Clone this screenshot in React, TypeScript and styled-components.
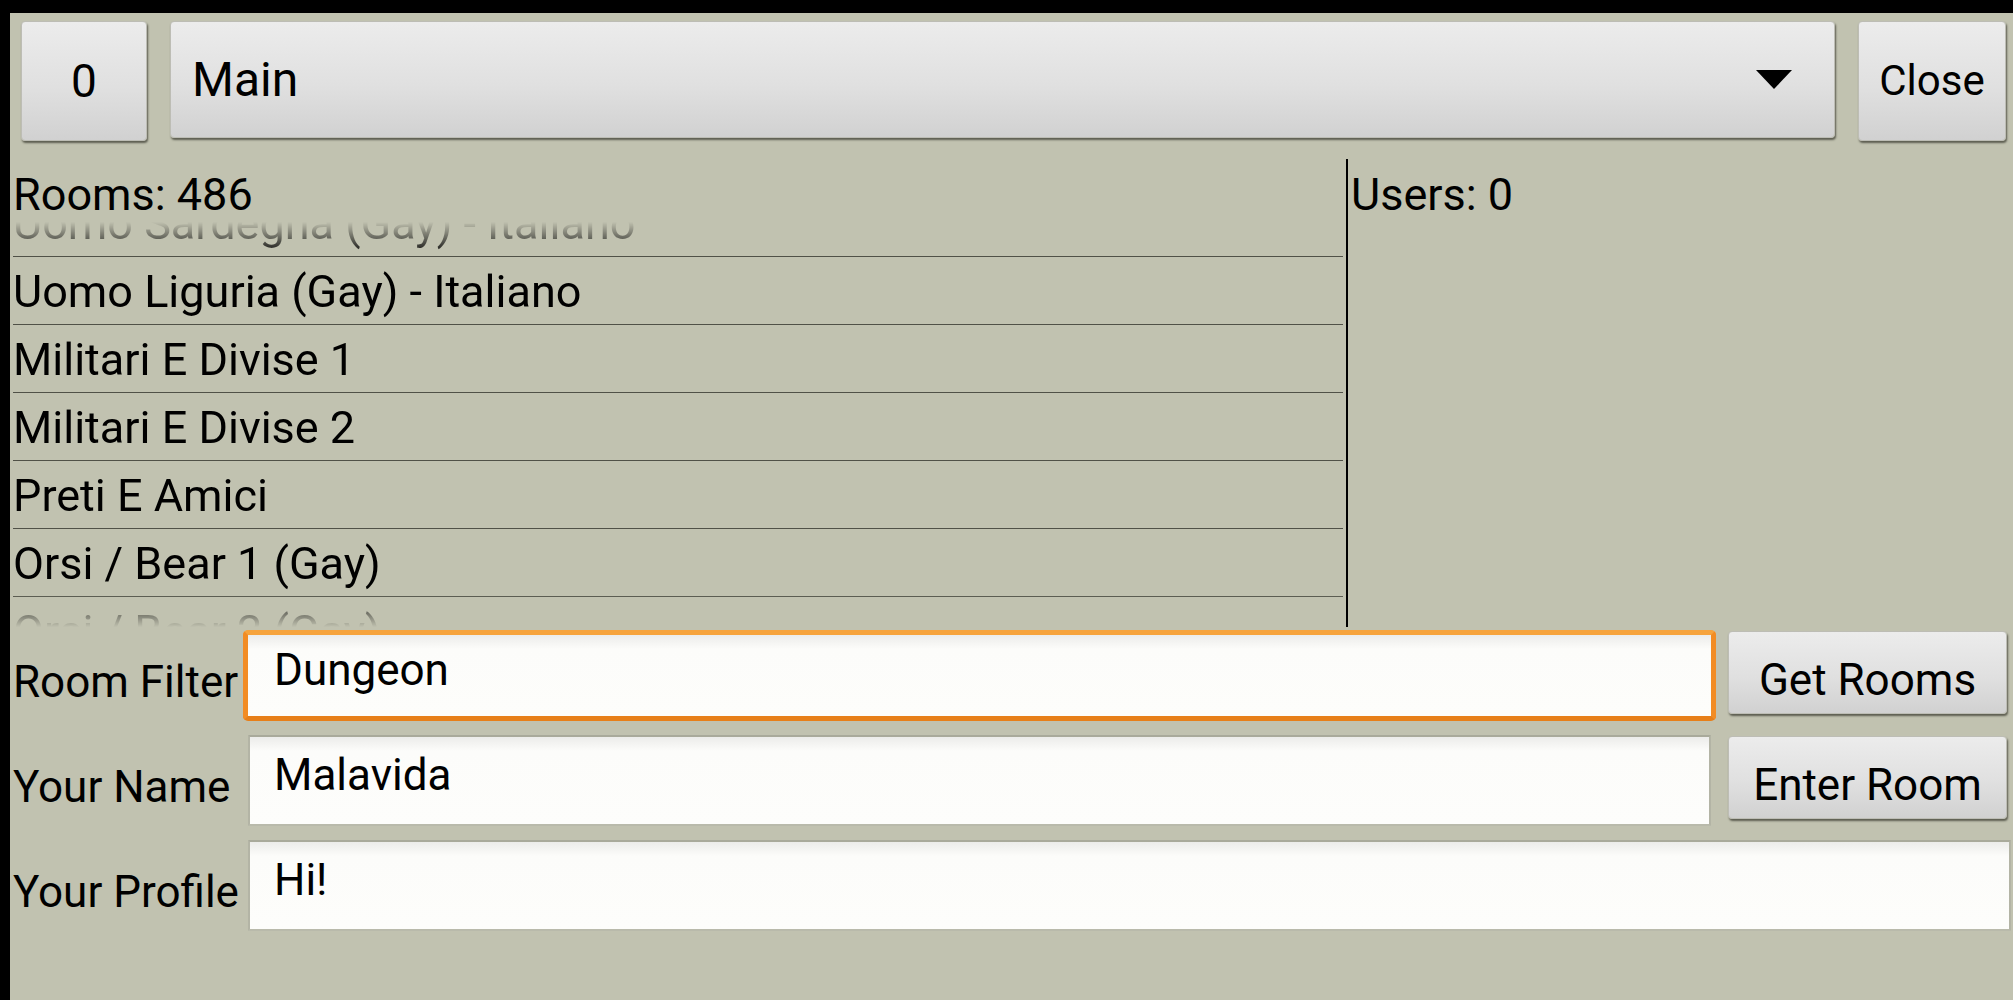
import styled, { createGlobalStyle } from 'styled-components';

// Global page styles
const GlobalStyle = createGlobalStyle`
  html, body {
    margin: 0;
    padding: 0;
    background: #000;
  }
  body {
    font-family: Roboto, "Liberation Sans", Arial, sans-serif;
    color: #000;
  }
`;

// Screen area (black bars on top and left are the body)
const Screen = styled.div`
  margin: 13px 0 0 10px;
  height: 987px;
  background: #c1c2b0;
  display: flex;
  flex-direction: column;
  overflow: hidden;
`;

// Top toolbar
const TopBar = styled.div`
  display: flex;
  align-items: flex-start;
  gap: 23px;
  padding: 8px 7px 0 11px;
  height: 130px;
  box-sizing: border-box;
  flex: none;
`;

const GrayButton = styled.button<{ $w: number; $h: number; $fs: number }>`
  width: ${(p) => p.$w}px;
  height: ${(p) => p.$h}px;
  flex: none;
  margin: 0;
  padding: 0;
  border: 1px solid #bdbdb5;
  border-radius: 4px;
  background: linear-gradient(to bottom, #ececec 0%, #e0e0e0 55%, #d1d1d1 100%);
  box-shadow: 1px 2px 2px rgba(40, 40, 30, 0.65);
  font-family: Roboto, "Liberation Sans", Arial, sans-serif;
  font-size: ${(p) => p.$fs}px;
  color: #000;
  line-height: 1;
`;

const Spinner = styled.div`
  flex: 1;
  height: 117px;
  box-sizing: border-box;
  display: flex;
  align-items: center;
  justify-content: space-between;
  padding: 0 42px 0 21px;
  border: 1px solid #bdbdb5;
  border-radius: 4px;
  background: linear-gradient(to bottom, #ececec 0%, #e0e0e0 55%, #d1d1d1 100%);
  box-shadow: 1px 2px 2px rgba(40, 40, 30, 0.65);
  font-size: 48px;
`;

// Rooms / users panels
const MainArea = styled.div`
  display: flex;
  flex: none;
  margin-top: 16px;
  padding-left: 3px;
  height: 468px;
`;

const RoomsColumn = styled.div`
  width: 1330px;
  display: flex;
  flex-direction: column;
`;

const UsersColumn = styled.div`
  flex: 1;
  margin-left: 3px;
  padding-left: 3px;
  border-left: 2px solid #000;
`;

const PanelHeader = styled.div`
  height: 63px;
  box-sizing: border-box;
  padding-top: 10px;
  font-size: 45px;
  line-height: 52px;
  white-space: nowrap;
`;

const ListViewport = styled.div`
  flex: 1;
  overflow: hidden;
  -webkit-mask-image: linear-gradient(to bottom, transparent 0, #000 34px, #000 calc(100% - 34px), transparent 100%);
  mask-image: linear-gradient(to bottom, transparent 0, #000 34px, #000 calc(100% - 34px), transparent 100%);
`;

const ListInner = styled.div<{ $scroll: number }>`
  margin-top: ${(p) => -p.$scroll}px;
`;

const RoomRow = styled.div`
  height: 68px;
  box-sizing: border-box;
  padding-top: 9px;
  border-bottom: 1px solid #505147;
  font-size: 45px;
  line-height: 52px;
  white-space: nowrap;
`;

// Form at the bottom
const Form = styled.div`
  display: flex;
  flex-direction: column;
  flex: none;
  gap: 14px;
  margin-top: 3px;
`;

const FormRow = styled.div<{ $pr: number }>`
  display: flex;
  align-items: center;
  height: 91px;
  padding-right: ${(p) => p.$pr}px;
`;

const Label = styled.div`
  width: 236px;
  flex: none;
  box-sizing: border-box;
  padding: 12px 0 0 3px;
  font-size: 44px;
  line-height: 52px;
  white-space: nowrap;
`;

const Field = styled.div<{ $focused?: boolean }>`
  flex: 1;
  align-self: stretch;
  box-sizing: border-box;
  margin: ${(p) => (p.$focused ? '0 -3px' : '0 2px')};
  padding: ${(p) => (p.$focused ? '9px 26px 0' : '12px 24px 0')};
  font-size: 44px;
  line-height: 52px;
  white-space: nowrap;
  background: linear-gradient(to bottom, #ececea 0px, #fcfcfa 14px, #fdfdfb 100%);
  border: ${(p) => (p.$focused ? '5px solid #f28c24' : '2px solid #b3b4a5')};
  border-top-color: ${(p) => (p.$focused ? '#f6a33c' : '#a9aa9b')};
  border-bottom-color: ${(p) => (p.$focused ? '#e77f19' : '#b9baab')};
  border-radius: ${(p) => (p.$focused ? '5px' : '1px')};
`;

const ActionButton = styled(GrayButton)`
  align-self: flex-start;
  margin: 1px 0 0 15px;
  padding-top: 15px;
`;

const rooms = [
  'Uomo Sardegna (Gay) - Italiano',
  'Uomo Liguria (Gay) - Italiano',
  'Militari E Divise 1',
  'Militari E Divise 2',
  'Preti E Amici',
  'Orsi / Bear 1 (Gay)',
  'Orsi / Bear 2 (Gay)',
  'Orsi / Bear 3 (Gay)',
];

const DropArrow = () => (
  <svg width="36" height="19" viewBox="0 0 36 19">
    <polygon points="0,0 36,0 18,19" fill="#000" />
  </svg>
);

const App = () => {
  return (
    <>
      <GlobalStyle />
      <Screen>
        <TopBar>
          <GrayButton $w={126} $h={120} $fs={46}>
            0
          </GrayButton>
          <Spinner>
            <span>Main</span>
            <DropArrow />
          </Spinner>
          <GrayButton $w={148} $h={120} $fs={42}>
            Close
          </GrayButton>
        </TopBar>

        <MainArea>
          <RoomsColumn>
            <PanelHeader>Rooms: 486</PanelHeader>
            <ListViewport>
              <ListInner $scroll={33}>
                {rooms.map((r) => (
                  <RoomRow key={r}>{r}</RoomRow>
                ))}
              </ListInner>
            </ListViewport>
          </RoomsColumn>
          <UsersColumn>
            <PanelHeader>Users: 0</PanelHeader>
          </UsersColumn>
        </MainArea>

        <Form>
          <FormRow $pr={6}>
            <Label>Room Filter</Label>
            <Field $focused>Dungeon</Field>
            <ActionButton $w={279} $h={83} $fs={44}>
              Get Rooms
            </ActionButton>
          </FormRow>
          <FormRow $pr={6}>
            <Label>Your Name</Label>
            <Field>Malavida</Field>
            <ActionButton $w={279} $h={83} $fs={44}>
              Enter Room
            </ActionButton>
          </FormRow>
          <FormRow $pr={-1}>
            <Label>Your Profile</Label>
            <Field>Hi!</Field>
          </FormRow>
        </Form>
      </Screen>
    </>
  );
};

export default App;
